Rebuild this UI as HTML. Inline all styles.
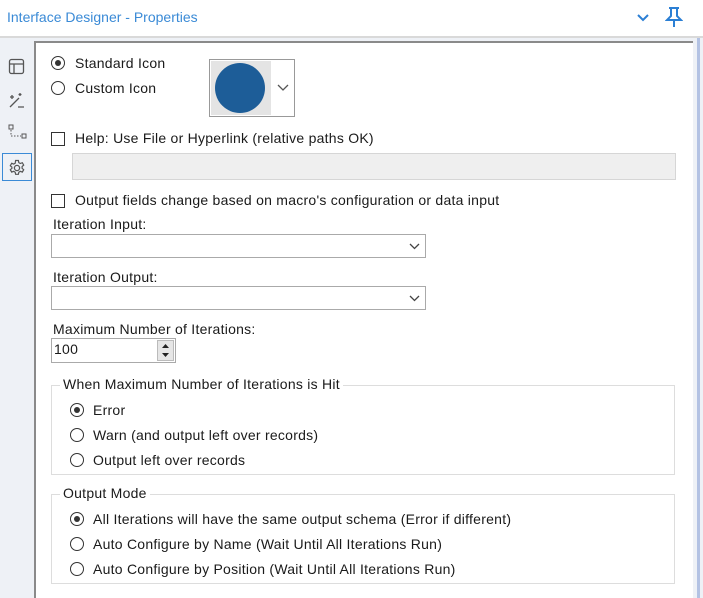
<!DOCTYPE html>
<html><head><style>
*{box-sizing:border-box;margin:0;padding:0}
body{width:703px;height:598px;overflow:hidden;background:#fff;font-family:"Liberation Sans",sans-serif;font-size:13px;color:#1a1a1a;position:relative}
.a{position:absolute}
.t{position:absolute;white-space:nowrap;font-size:14px;letter-spacing:0.25px}
.rad{position:absolute;width:14px;height:14px;border:1px solid #333;border-radius:50%;background:#fff}
.rad.on::after{content:"";position:absolute;left:3px;top:3px;width:6px;height:6px;border-radius:50%;background:#333}
.cb{position:absolute;width:14px;height:14px;border:1px solid #333;background:#fff}
.sel{position:absolute;height:24px;border:1px solid #aaa;background:#fff}
.sel svg{position:absolute;right:5px;top:8px}
.grp{position:absolute;border:1px solid #ddd}
</style></head><body>
<div class="a" style="left:0;top:0;width:703px;height:36px;background:#fff"></div>
<div class="t" style="left:7px;top:9px;color:#3a8ad6;font-size:14px;letter-spacing:0">Interface Designer - Properties</div>
<svg class="a" style="left:637px;top:12px" width="12" height="10"><path d="M1 3 L6 8 L11 3" stroke="#2b7fd4" stroke-width="2" fill="none"/></svg>
<svg class="a" style="left:665px;top:6px" width="18" height="22"><path d="M4 2 H14 M6 2 V10 L2 14 H16 L12 10 V2 M9 14 V21" stroke="#2b7fd4" stroke-width="2" fill="none"/></svg>
<div class="a" style="left:0;top:36px;width:703px;height:2px;background:#d9d9d9"></div>
<div class="a" style="left:0;top:38px;width:703px;height:560px;background:#eef1f6"></div>
<div class="a" style="left:34px;top:41px;width:659px;height:557px;background:#fff;border-left:2px solid #8a8a8a;border-top:2px solid #8a8a8a"></div>
<div class="a" style="left:697px;top:38px;width:3px;height:560px;background:#b3c2e3"></div>
<svg class="a" style="left:8px;top:58px" width="17" height="17"><rect x="1.5" y="1.5" width="14" height="14" rx="2" stroke="#555" fill="none" stroke-width="1.3"/><path d="M1.5 6 H15.5 M6 6 V15.5" stroke="#555" stroke-width="1.3"/></svg>
<svg class="a" style="left:8px;top:92px" width="17" height="17"><path d="M2 15 L11 6 M10 15 H16 M4 3 V7 M2 5 H6 M12 1 V4 M10.5 2.5 H13.5" stroke="#555" stroke-width="1.3" fill="none"/></svg>
<svg class="a" style="left:7px;top:124px" width="20" height="16"><rect x="2" y="1" width="4" height="4" stroke="#555" fill="none"/><rect x="15" y="10" width="4" height="4" stroke="#555" fill="none"/><path d="M4 6 V12 H14" stroke="#555" stroke-dasharray="1.5 1.5" fill="none"/></svg>
<div class="a" style="left:2px;top:153px;width:30px;height:28px;border:1px solid #3a8ad6"></div>
<svg class="a" style="left:8px;top:159px" width="18" height="18" viewBox="0 0 18 18"><circle cx="9" cy="9" r="2.6" stroke="#555" fill="none" stroke-width="1.3"/><path d="M7.6 1.5h2.8l.4 2.1 1.5.9 2-.8 1.4 2.4-1.6 1.4v1.8l1.6 1.4-1.4 2.4-2-.8-1.5.9-.4 2.1H7.6l-.4-2.1-1.5-.9-2 .8-1.4-2.4 1.6-1.4V8.1L2.3 6.7l1.4-2.4 2 .8 1.5-.9z" stroke="#555" fill="none" stroke-width="1.2"/></svg>
<div class="rad on" style="left:51px;top:56px"></div><div class="t" style="left:75px;top:55px">Standard Icon</div>
<div class="rad" style="left:51px;top:81px"></div><div class="t" style="left:75px;top:80px">Custom Icon</div>
<div class="a" style="left:209px;top:59px;width:86px;height:58px;border:1px solid #999;background:#fff"></div>
<div class="a" style="left:211px;top:61px;width:60px;height:54px;background:#e4e4e4"></div>
<div class="a" style="left:215px;top:63px;width:50px;height:50px;border-radius:50%;background:#1d5d98"></div>
<svg class="a" style="left:277px;top:84px" width="12" height="8"><path d="M1 1 L6 6 L11 1" stroke="#555" stroke-width="1.3" fill="none"/></svg>
<div class="cb" style="left:51px;top:132px"></div><div class="t" style="left:75px;top:130px">Help: Use File or Hyperlink (relative paths OK)</div>
<div class="a" style="left:72px;top:153px;width:604px;height:27px;background:#efefef;border:1px solid #d6d6d6"></div>
<div class="cb" style="left:51px;top:194px"></div><div class="t" style="left:75px;top:192px">Output fields change based on macro's configuration or data input</div>
<div class="t" style="left:53px;top:216px">Iteration Input:</div>
<div class="sel" style="left:51px;top:234px;width:375px"><svg width="11" height="7"><path d="M1 1 L5.5 5.5 L10 1" stroke="#444" stroke-width="1.3" fill="none"/></svg></div>
<div class="t" style="left:53px;top:269px">Iteration Output:</div>
<div class="sel" style="left:51px;top:286px;width:375px"><svg width="11" height="7"><path d="M1 1 L5.5 5.5 L10 1" stroke="#444" stroke-width="1.3" fill="none"/></svg></div>
<div class="t" style="left:53px;top:321px">Maximum Number of Iterations:</div>
<div class="a" style="left:51px;top:338px;width:125px;height:25px;border:1px solid #aaa;background:#fff"></div>
<div class="t" style="left:54px;top:341px">100</div>
<div class="a" style="left:157px;top:340px;width:17px;height:21px;background:#e6e6e6;border:1px solid #bbb"></div>
<svg class="a" style="left:161px;top:342px" width="9" height="17"><path d="M1 6 L4.5 2 L8 6Z M1 11 L4.5 15 L8 11Z" fill="#222"/></svg>
<div class="grp" style="left:51px;top:385px;width:624px;height:90px"></div>
<div class="t" style="left:60px;top:376px;background:#fff;padding:0 3px">When Maximum Number of Iterations is Hit</div>
<div class="rad on" style="left:70px;top:403px"></div><div class="t" style="left:93px;top:402px">Error</div>
<div class="rad" style="left:70px;top:428px"></div><div class="t" style="left:93px;top:427px">Warn (and output left over records)</div>
<div class="rad" style="left:70px;top:453px"></div><div class="t" style="left:93px;top:452px">Output left over records</div>
<div class="grp" style="left:51px;top:494px;width:624px;height:90px"></div>
<div class="t" style="left:60px;top:485px;background:#fff;padding:0 3px">Output Mode</div>
<div class="rad on" style="left:70px;top:512px"></div><div class="t" style="left:93px;top:511px">All Iterations will have the same output schema (Error if different)</div>
<div class="rad" style="left:70px;top:537px"></div><div class="t" style="left:93px;top:536px">Auto Configure by Name (Wait Until All Iterations Run)</div>
<div class="rad" style="left:70px;top:562px"></div><div class="t" style="left:93px;top:561px">Auto Configure by Position (Wait Until All Iterations Run)</div>
</body></html>
